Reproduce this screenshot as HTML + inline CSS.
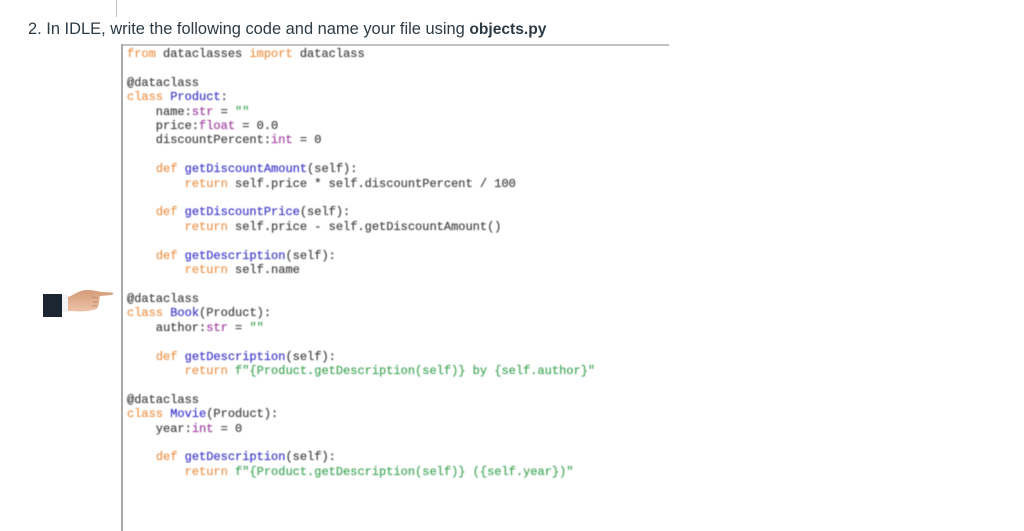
<!DOCTYPE html>
<html>
<head>
<meta charset="utf-8">
<style>
html,body{margin:0;padding:0;background:#fff;}
body{width:1024px;height:531px;position:relative;overflow:hidden;font-family:"Liberation Sans",sans-serif;}
.vt{position:absolute;left:116px;top:0;width:1px;height:17px;background:#c4c4c4;}
h1{position:absolute;left:28px;top:19px;margin:0;font-weight:400;font-size:16.45px;line-height:21px;color:#2d3b45;white-space:nowrap;}
h1 b{font-weight:700;font-size:15.6px;}
.top{position:absolute;left:121px;top:44px;width:548px;height:2px;background:#c2c2c2;}
.left{position:absolute;left:121px;top:44px;width:2px;height:487px;background:#a9a9a9;}
pre{position:absolute;left:127px;top:47px;margin:0;font-family:"Liberation Mono",monospace;font-size:12px;line-height:14.41px;color:#4a4a4a;-webkit-text-stroke:.25px #4a4a4a;filter:blur(.5px);}
.k{color:#ee9a55;-webkit-text-stroke:.25px #ee9a55;}
.n{color:#4541cc;-webkit-text-stroke:.25px #4541cc;}
.t{color:#a64aa6;-webkit-text-stroke:.25px #a64aa6;}
.s{color:#4aab60;-webkit-text-stroke:.25px #4aab60;}
svg{position:absolute;left:40px;top:286px;}
</style>
</head>
<body>
<div class="vt"></div>
<h1>2. In IDLE, write the following code and name your file using <b>objects.py</b></h1>
<div class="top"></div>
<div class="left"></div>
<svg width="78" height="34" viewBox="40 286 78 34">
<defs><linearGradient id="g" x1="0" y1="0" x2="0" y2="1"><stop offset="0" stop-color="#d39c78"/><stop offset="1" stop-color="#ecc3a8"/></linearGradient></defs>
<rect x="43" y="294" width="19" height="23" fill="#1c2633"/>
<rect x="62" y="295" width="6" height="17" fill="#f3f3f3"/>
<path d="M68 297C74 295 79 290 87 290C92 290 97 291 101 292L112 292.500Q114.500 293.500 112 295L100 296C99 298 100 300 99 302C99 306 98 310 92 310C86 312 78 311.500 68 311Z" fill="url(#g)"/>
<path d="M98 298L92 297M98 302L93 302M97 306L92 306" stroke="#b9805f" stroke-width=".8" fill="none"/>
</svg>
<pre><span class="k">from</span> dataclasses <span class="k">import</span> dataclass

@dataclass
<span class="k">class</span> <span class="n">Product</span>:
    name:<span class="t">str</span> = <span class="s">""</span>
    price:<span class="t">float</span> = 0.0
    discountPercent:<span class="t">int</span> = 0

    <span class="k">def</span> <span class="n">getDiscountAmount</span>(self):
        <span class="k">return</span> self.price * self.discountPercent / 100

    <span class="k">def</span> <span class="n">getDiscountPrice</span>(self):
        <span class="k">return</span> self.price - self.getDiscountAmount()

    <span class="k">def</span> <span class="n">getDescription</span>(self):
        <span class="k">return</span> self.name

@dataclass
<span class="k">class</span> <span class="n">Book</span>(Product):
    author:<span class="t">str</span> = <span class="s">""</span>

    <span class="k">def</span> <span class="n">getDescription</span>(self):
        <span class="k">return</span> <span class="s">f"{Product.getDescription(self)} by {self.author}"</span>

@dataclass
<span class="k">class</span> <span class="n">Movie</span>(Product):
    year:<span class="t">int</span> = 0

    <span class="k">def</span> <span class="n">getDescription</span>(self):
        <span class="k">return</span> <span class="s">f"{Product.getDescription(self)} ({self.year})"</span></pre>
</body>
</html>
